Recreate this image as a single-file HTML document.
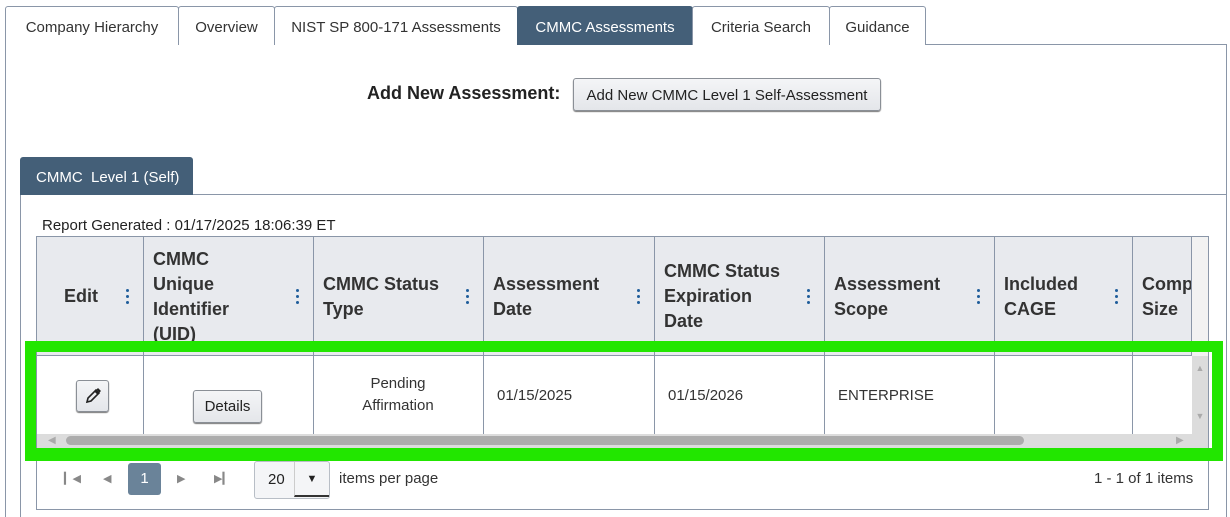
<!DOCTYPE html>
<html><head><style>
*{box-sizing:border-box;margin:0;padding:0}
html,body{width:1230px;height:517px;overflow:hidden}
body{background:#fff;font-family:"Liberation Sans",sans-serif;color:#222;position:relative}
.a{position:absolute}
.tab{position:absolute;top:6px;height:39px;border:1px solid #8a96a8;border-bottom:none;border-radius:3px 3px 0 0;font-size:15px;line-height:42px;text-align:center;color:#333;background:#fff}
.dark{background:#445f78;color:#fff;border-color:#445f78}
.btn{position:absolute;border:1px solid #8a8f96;border-radius:3px;background:linear-gradient(#f4f5f7,#e4e6ea);box-shadow:0 1px 1px #777;font-size:15px;text-align:center;color:#222}
.th{position:absolute;top:237px;height:119px;border-right:1px solid #8a96a8;font-size:18px;font-weight:bold;color:#333;line-height:25px;padding-left:10px;display:flex;align-items:center}
.dots{position:absolute;right:14px;top:50%;margin-top:-8px;width:3px}
.dots i{display:block;width:3px;height:3px;border-radius:2px;background:#1f5d9a;margin-bottom:3px}
.td{position:absolute;top:356px;height:78px;border-right:1px solid #8a96a8;font-size:15px;color:#333;display:flex;align-items:center}
</style></head><body>
<div class="a" style="left:5px;top:44px;width:1222px;height:473px;border:1px solid #8a96a8;border-bottom:none"></div>
<div class="tab" style="left:5px;width:174px">Company Hierarchy</div>
<div class="tab" style="left:178px;width:97px">Overview</div>
<div class="tab" style="left:274px;width:244px">NIST SP 800-171 Assessments</div>
<div class="tab dark" style="left:517px;width:176px">CMMC Assessments</div>
<div class="tab" style="left:692px;width:138px">Criteria Search</div>
<div class="tab" style="left:829px;width:97px">Guidance</div>

<div class="a" style="left:367px;top:83px;font-size:18px;font-weight:bold;color:#222">Add New Assessment:</div>
<div class="btn" style="left:573px;top:78px;width:308px;height:33px;line-height:33px">Add New CMMC Level 1 Self-Assessment</div>

<div class="a" style="left:20px;top:194px;width:1207px;height:323px;border:1px solid #8a96a8;border-bottom:none"></div>
<div class="a dark" style="left:20px;top:157px;width:173px;height:38px;border-radius:3px 3px 0 0;font-size:15px;line-height:42px;padding-left:16px">CMMC&nbsp; Level 1 (Self)</div>

<div class="a" style="left:42px;top:217px;font-size:15px;color:#222">Report Generated : 01/17/2025 18:06:39 ET</div>

<div class="a" style="left:36px;top:236px;width:1173px;height:274px;border:1px solid #8a96a8;overflow:hidden"></div>
<div class="a" style="left:37px;top:237px;width:1155px;height:119px;background:#e8eaee;border-bottom:1px solid #8a96a8"></div>
<div class="th" style="left:37px;width:107px;padding-left:27px">Edit<span class="dots"><i></i><i></i><i></i></span></div>
<div class="th" style="left:143px;width:171px">CMMC<br>Unique<br>Identifier<br>(UID)<span class="dots"><i></i><i></i><i></i></span></div>
<div class="th" style="left:313px;width:171px">CMMC Status<br>Type<span class="dots"><i></i><i></i><i></i></span></div>
<div class="th" style="left:483px;width:172px">Assessment<br>Date<span class="dots"><i></i><i></i><i></i></span></div>
<div class="th" style="left:654px;width:171px">CMMC Status<br>Expiration<br>Date<span class="dots"><i></i><i></i><i></i></span></div>
<div class="th" style="left:824px;width:171px">Assessment<br>Scope<span class="dots"><i></i><i></i><i></i></span></div>
<div class="th" style="left:994px;width:139px">Included<br>CAGE<span class="dots"><i></i><i></i><i></i></span></div>
<div class="th" style="left:1132px;width:60px;overflow:hidden;white-space:nowrap">Comp<br>Size</div>
<div class="a" style="left:1192px;top:237px;width:16px;height:119px;background:#f2f2f2"></div>

<div class="td" style="left:37px;width:107px"></div>
<div class="btn" style="left:76px;top:380px;width:33px;height:32px"><svg width="31" height="30" viewBox="0 0 31 30"><path d="M10 21l1-4 8-8 3 3-8 8z M18 10l3 3" fill="none" stroke="#222" stroke-width="1.6"/><path d="M19.5 8.5l1.5-1.5 3 3-1.5 1.5z" fill="#222"/></svg></div>
<div class="td" style="left:143px;width:171px"></div>
<div class="btn" style="left:193px;top:390px;width:69px;height:33px;line-height:31px">Details</div>
<div class="td" style="left:313px;width:171px;justify-content:center;text-align:center;line-height:22px">Pending<br>Affirmation</div>
<div class="td" style="left:483px;width:172px;padding-left:14px">01/15/2025</div>
<div class="td" style="left:654px;width:171px;padding-left:14px">01/15/2026</div>
<div class="td" style="left:824px;width:171px;padding-left:14px">ENTERPRISE</div>
<div class="td" style="left:994px;width:139px"></div>
<div class="td" style="left:1132px;width:60px;border:none"></div>
<div class="a" style="left:1192px;top:356px;width:16px;height:78px;background:#dcdcdc;color:#aaa;font-size:9px;text-align:center;line-height:12px;padding-top:6px">▲<br><br><br><br>▼</div>
<div class="a" style="left:37px;top:434px;width:1171px;height:14px;background:#dcdcdc"></div>
<div class="a" style="left:66px;top:436px;width:958px;height:9px;border-radius:5px;background:#acacac"></div>
<div class="a" style="left:48px;top:434px;color:#aaa;font-size:10px;line-height:14px">◀</div>
<div class="a" style="left:1176px;top:434px;color:#aaa;font-size:10px;line-height:14px">▶</div>

<div class="a" style="left:25px;top:341px;width:1198px;height:120px;border:11px solid #22e600;border-bottom-width:13px"></div>

<div class="a" style="left:64px;top:472px;color:#888;font-size:11px">&#9614;&#9664;</div>
<div class="a" style="left:103px;top:472px;color:#888;font-size:11px">&#9664;</div>
<div class="a" style="left:128px;top:463px;width:33px;height:32px;background:#6a8399;color:#fff;border-radius:3px;text-align:center;line-height:32px;font-size:15px">1</div>
<div class="a" style="left:177px;top:472px;color:#888;font-size:11px">&#9654;</div>
<div class="a" style="left:214px;top:472px;color:#888;font-size:11px">&#9654;&#9614;</div>
<div class="a" style="left:254px;top:461px;width:76px;height:38px;border:1px solid #b8bec6;border-radius:3px;background:#f4f5f7;font-size:15px;line-height:36px;padding-left:13px">20</div>
<div class="a" style="left:294px;top:462px;width:35px;height:35px;border-left:1px solid #ccc;border-bottom:2px solid #333;font-size:11px;text-align:center;line-height:35px">&#9660;</div>
<div class="a" style="left:339px;top:470px;font-size:15px;color:#333">items per page</div>
<div class="a" style="left:1094px;top:470px;font-size:15px;color:#333">1 - 1 of 1 items</div>
</body></html>
